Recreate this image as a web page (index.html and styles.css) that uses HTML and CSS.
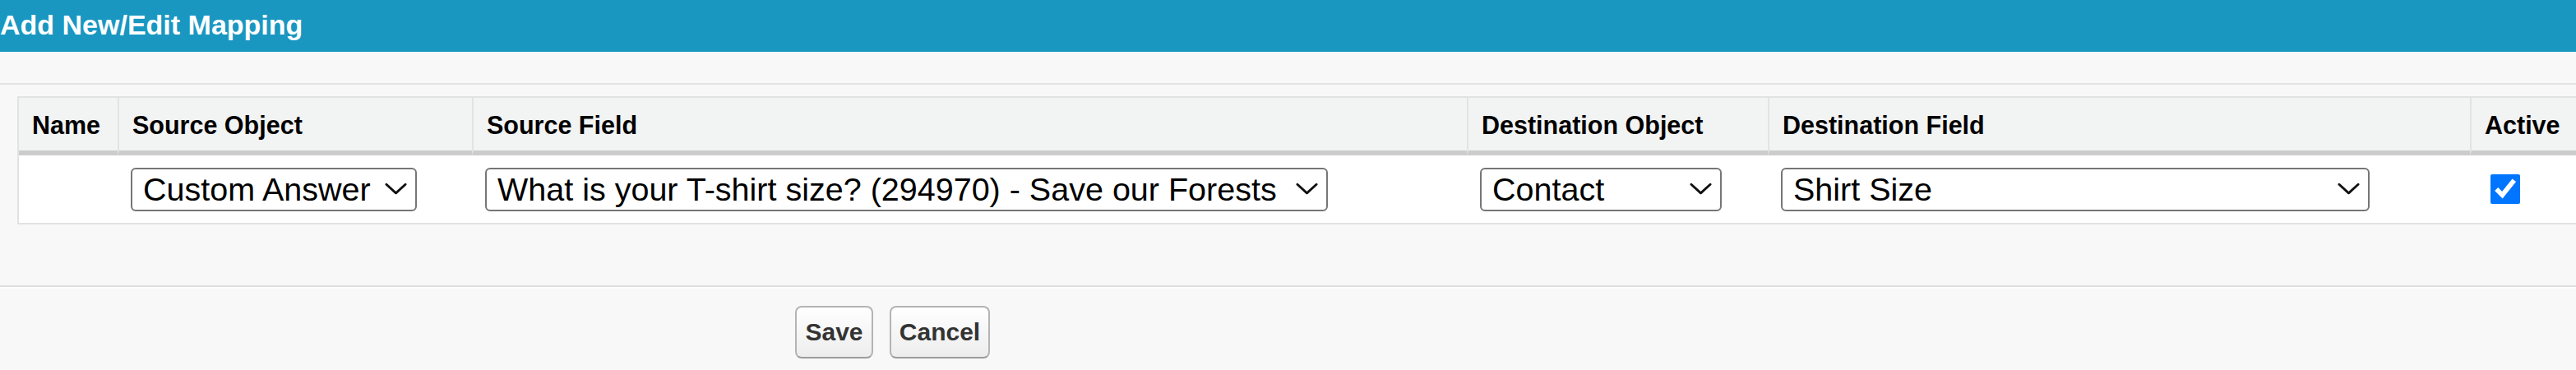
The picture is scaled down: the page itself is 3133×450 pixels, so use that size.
FILE: index.html
```html
<!DOCTYPE html>
<html lang="en">
<head>
<meta charset="utf-8">
<title>Add New/Edit Mapping</title>
<link rel="stylesheet" href="styles.css">
</head>
<body>
<div class="titlebar"><h2 class="title">Add New/Edit Mapping</h2></div>
<div class="spacer"></div>
<div class="panel">
  <div class="grid">
    <div class="hcell first">Name</div>
    <div class="hcell">Source Object</div>
    <div class="hcell">Source Field</div>
    <div class="hcell">Destination Object</div>
    <div class="hcell">Destination Field</div>
    <div class="hcell">Active</div>

    <div class="dcell"></div>
    <div class="dcell">
      <div class="select w-so"><span>Custom Answer</span><svg class="chev" viewBox="0 0 28 16"><path d="M2 2 L14 13 L26 2"/></svg></div>
    </div>
    <div class="dcell">
      <div class="select w-sf"><span>What is your T-shirt size? (294970) - Save our Forests</span><svg class="chev" viewBox="0 0 28 16"><path d="M2 2 L14 13 L26 2"/></svg></div>
    </div>
    <div class="dcell">
      <div class="select w-do"><span>Contact</span><svg class="chev" viewBox="0 0 28 16"><path d="M2 2 L14 13 L26 2"/></svg></div>
    </div>
    <div class="dcell">
      <div class="select w-df"><span>Shirt Size</span><svg class="chev" viewBox="0 0 28 16"><path d="M2 2 L14 13 L26 2"/></svg></div>
    </div>
    <div class="dcell">
      <input class="check" type="checkbox" checked>
    </div>
  </div>
</div>
<div class="footer">
  <button class="btn btn-save" type="button">Save</button>
  <button class="btn btn-cancel" type="button">Cancel</button>
</div>
</body>
</html>
```

FILE: styles.css
```css
html, body {
  margin: 0;
  padding: 0;
}
body {
  background: #f8f8f8;
  font-family: "Liberation Sans", Arial, Helvetica, sans-serif;
  color: #000;
  overflow: hidden;
  width: 3133px;
  height: 450px;
}
.titlebar {
  height: 63px;
  background: #1997c1;
  display: flex;
  align-items: center;
}
.title {
  margin: 0;
  padding: 0 0 3px 0;
  font-size: 34px;
  font-weight: bold;
  color: #fff;
}
.spacer {
  height: 38px;
  border-bottom: 2px solid #e3e3e3;
}
.panel {
  padding: 14px 0 74px 21px;
  border-bottom: 2px solid #dedede;
  overflow: hidden;
}
.grid {
  display: grid;
  grid-template-columns: 120px 431px 1210px 366px 854px 140px;
  grid-template-rows: 70px 82px;
  border: 2px solid #e2e2e2;
  background: #fff;
  width: max-content;
}
.hcell {
  background: #f2f3f3;
  border-left: 2px solid #e2e4e4;
  border-bottom: 6px solid #cccccc;
  padding: 2px 0 0 16px;
  font-size: 30.5px;
  font-weight: bold;
  display: flex;
  align-items: center;
  white-space: nowrap;
}
.hcell.first {
  border-left: none;
}
.dcell {
  background: #fff;
  padding-left: 16px;
  display: flex;
  align-items: center;
}
.select {
  box-sizing: border-box;
  height: 53px;
  border: 2px solid #767676;
  border-radius: 6px;
  background: #fff;
  display: flex;
  align-items: center;
  justify-content: space-between;
  padding: 0 10px 0 13px;
  font-size: 39.5px;
  white-space: nowrap;
}
.select span {
  padding-top: 1px;
}
.chev {
  width: 27px;
  height: 16px;
  flex: none;
  margin-left: 8px;
}
.chev path {
  fill: none;
  stroke: #111;
  stroke-width: 3;
  stroke-linecap: round;
  stroke-linejoin: round;
}
.w-so { width: 348px; }
.w-sf { width: 1025px; }
.w-do { width: 294px; }
.w-df { width: 716px; }
.check {
  width: 36px;
  height: 36px;
  margin: 0 0 0 9px;
  accent-color: #0075ff;
}
.footer {
  border-top: 2px solid #fdfdfd;
  padding: 21px 0 0 967px;
  display: flex;
  gap: 20px;
}
.btn {
  box-sizing: border-box;
  height: 64px;
  border: 2px solid #b4b4b4;
  border-bottom-color: #9c9c9c;
  border-radius: 8px;
  background: linear-gradient(#ffffff, #ededed);
  font-family: "Liberation Sans", Arial, Helvetica, sans-serif;
  font-size: 30px;
  font-weight: bold;
  color: #333;
  padding: 0;
}
.btn-save { width: 95px; }
.btn-cancel { width: 122px; }
```
